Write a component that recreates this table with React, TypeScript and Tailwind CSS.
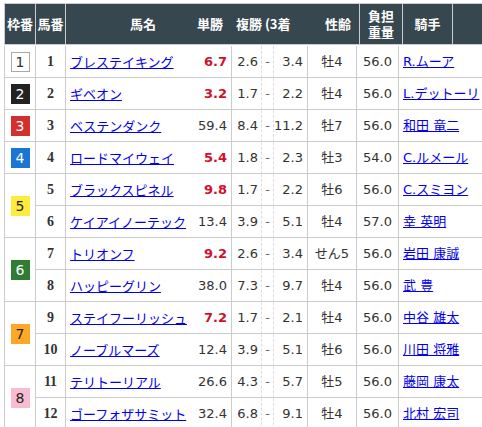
import React from "react";

type Row = {
  no: number;
  name: string;
  win: string;
  hot: boolean;
  lo: string;
  hi: string;
  sex: string;
  wt: string;
  jockey: string;
};

const rows: Row[] = [
  { no: 1, name: "ブレステイキング", win: "6.7", hot: true, lo: "2.6", hi: "3.4", sex: "牡4", wt: "56.0", jockey: "R.ムーア" },
  { no: 2, name: "ギベオン", win: "3.2", hot: true, lo: "1.7", hi: "2.2", sex: "牡4", wt: "56.0", jockey: "L.デットーリ" },
  { no: 3, name: "ベステンダンク", win: "59.4", hot: false, lo: "8.4", hi: "11.2", sex: "牡7", wt: "56.0", jockey: "和田 竜二" },
  { no: 4, name: "ロードマイウェイ", win: "5.4", hot: true, lo: "1.8", hi: "2.3", sex: "牡3", wt: "54.0", jockey: "C.ルメール" },
  { no: 5, name: "ブラックスピネル", win: "9.8", hot: true, lo: "1.7", hi: "2.2", sex: "牡6", wt: "56.0", jockey: "C.スミヨン" },
  { no: 6, name: "ケイアイノーテック", win: "13.4", hot: false, lo: "3.9", hi: "5.1", sex: "牡4", wt: "57.0", jockey: "幸 英明" },
  { no: 7, name: "トリオンフ", win: "9.2", hot: true, lo: "2.6", hi: "3.4", sex: "せん5", wt: "56.0", jockey: "岩田 康誠" },
  { no: 8, name: "ハッピーグリン", win: "38.0", hot: false, lo: "7.3", hi: "9.7", sex: "牡4", wt: "56.0", jockey: "武 豊" },
  { no: 9, name: "ステイフーリッシュ", win: "7.2", hot: true, lo: "1.7", hi: "2.1", sex: "牡4", wt: "56.0", jockey: "中谷 雄太" },
  { no: 10, name: "ノーブルマーズ", win: "12.4", hot: false, lo: "3.9", hi: "5.1", sex: "牡6", wt: "56.0", jockey: "川田 将雅" },
  { no: 11, name: "テリトーリアル", win: "26.6", hot: false, lo: "4.3", hi: "5.7", sex: "牡5", wt: "56.0", jockey: "藤岡 康太" },
  { no: 12, name: "ゴーフォザサミット", win: "32.4", hot: false, lo: "6.8", hi: "9.1", sex: "牡4", wt: "56.0", jockey: "北村 宏司" },
];

// frame number for each horse row index, and whether that row starts the frame (with span)
const frames: Record<number, { f: number; span: 1 | 2 }> = {
  1: { f: 1, span: 1 },
  2: { f: 2, span: 1 },
  3: { f: 3, span: 1 },
  4: { f: 4, span: 1 },
  5: { f: 5, span: 2 },
  7: { f: 6, span: 2 },
  9: { f: 7, span: 2 },
  11: { f: 8, span: 2 },
};

function Badge({ f }: { f: number }) {
  const cls: Record<number, string> = {
    1: "bg-white text-[#333] border border-[#aaa]",
    2: "bg-[#222] text-white",
    3: "bg-[#d32f2f] text-white",
    4: "bg-[#1976d2] text-white",
    5: "bg-[#ffeb3b] text-[#222]",
    6: "bg-[#2e7d32] text-white",
    7: "bg-[#ffa726] text-[#222]",
    8: "bg-[#f8bbd0] text-[#222]",
  };
  return (
    <span
      className={`flex h-[20px] w-[19px] items-center justify-center text-[14px] leading-none ${cls[f]}`}
      style={{ fontFamily: '"DejaVu Sans", sans-serif' }}
    >
      {f}
    </span>
  );
}

const cell = "flex items-center border-b border-[#ccc] h-full";

export default function App() {
  return (
    <div
      className="w-[482px] h-[427px] overflow-hidden bg-white pt-[3px] pl-[4px] text-[13px] text-[#333]"
      style={{ fontFamily: '"DejaVu Sans", "Noto Sans CJK JP", sans-serif' }}
    >
      {/* header */}
      <div className="flex w-[600px] h-[42px] border-t border-b border-l border-[#ccc] bg-[#37474f] font-bold text-white leading-[16px]"
        style={{ fontFamily: '"Noto Sans CJK JP", sans-serif' }}>
        <div className="w-[31px] shrink-0 border-r border-[#ccc] flex items-center justify-center">枠番</div>
        <div className="w-[30px] shrink-0 border-r border-[#ccc] flex items-center justify-center">馬番</div>
        <div className="w-[294px] shrink-0 border-r border-[#ccc] flex items-center">
          <div className="w-[131px] shrink-0 pl-[64px]">馬名</div>
          <div className="w-[39px] shrink-0">単勝</div>
          <div className="w-[89px] shrink-0 whitespace-nowrap overflow-hidden">複勝 (3着</div>
          <div className="w-[34px] shrink-0">性齢</div>
        </div>
        <div className="w-[43px] shrink-0 border-r border-[#ccc] flex flex-col items-center justify-center">
          <span>負担</span>
          <span>重量</span>
        </div>
        <div className="w-[50px] shrink-0 border-r border-[#ccc] flex items-center justify-center">騎手</div>
        <div className="flex-1" />
      </div>

      {/* body */}
      <div className="mt-[1px] grid w-[515px] grid-cols-[31px_30px_132px_34px_30px_12px_34px_49px_42px_120px] auto-rows-[32px] border-l border-[#ccc]">
        {rows.map((r, i) => {
          const fr = frames[i + 1];
          return (
            <React.Fragment key={r.no}>
              {fr && (
                <div
                  className={`${cell} justify-center border-r ${fr.span === 2 ? "row-span-2" : ""}`}
                >
                  <Badge f={fr.f} />
                </div>
              )}
              <div
                className={`${cell} justify-center border-r font-bold text-[14px]`}
                style={{ fontFamily: '"Liberation Serif", serif' }}
              >
                {r.no}
              </div>
              <div className={`${cell} pl-[4px] whitespace-nowrap`}>
                <a
                  href="#"
                  className="text-[#0000ee] underline"
                  style={{ fontFamily: '"Noto Sans CJK JP", sans-serif' }}
                >
                  {r.name}
                </a>
              </div>
              <div
                className={`${cell} justify-end pr-[4px] border-r ${r.hot ? "font-bold text-[#d0102b]" : ""}`}
              >
                {r.win}
              </div>
              <div className={`${cell} justify-end pr-[3px] border-r border-r-[#ddd] border-dashed border-b-solid`} style={{ borderBottomStyle: "solid", borderRightStyle: "dashed" }}>
                {r.lo}
              </div>
              <div className={`${cell} justify-center border-r border-r-[#ddd] text-[#666]`} style={{ borderBottomStyle: "solid", borderRightStyle: "dashed" }}>
                -
              </div>
              <div className={`${cell} justify-end pr-[4px] border-r`}>{r.hi}</div>
              <div
                className={`${cell} justify-center border-r`}
              >
                <span style={{ fontFamily: '"DejaVu Sans", "Noto Sans CJK JP", sans-serif' }}>{r.sex}</span>
              </div>
              <div className={`${cell} justify-center border-r`}>{r.wt}</div>
              <div className={`${cell} pl-[4px] whitespace-nowrap`}>
                <a
                  href="#"
                  className="text-[#0000ee] underline"
                  style={{ fontFamily: '"DejaVu Sans", "Noto Sans CJK JP", sans-serif' }}
                >
                  {r.jockey}
                </a>
              </div>
            </React.Fragment>
          );
        })}
      </div>
    </div>
  );
}
